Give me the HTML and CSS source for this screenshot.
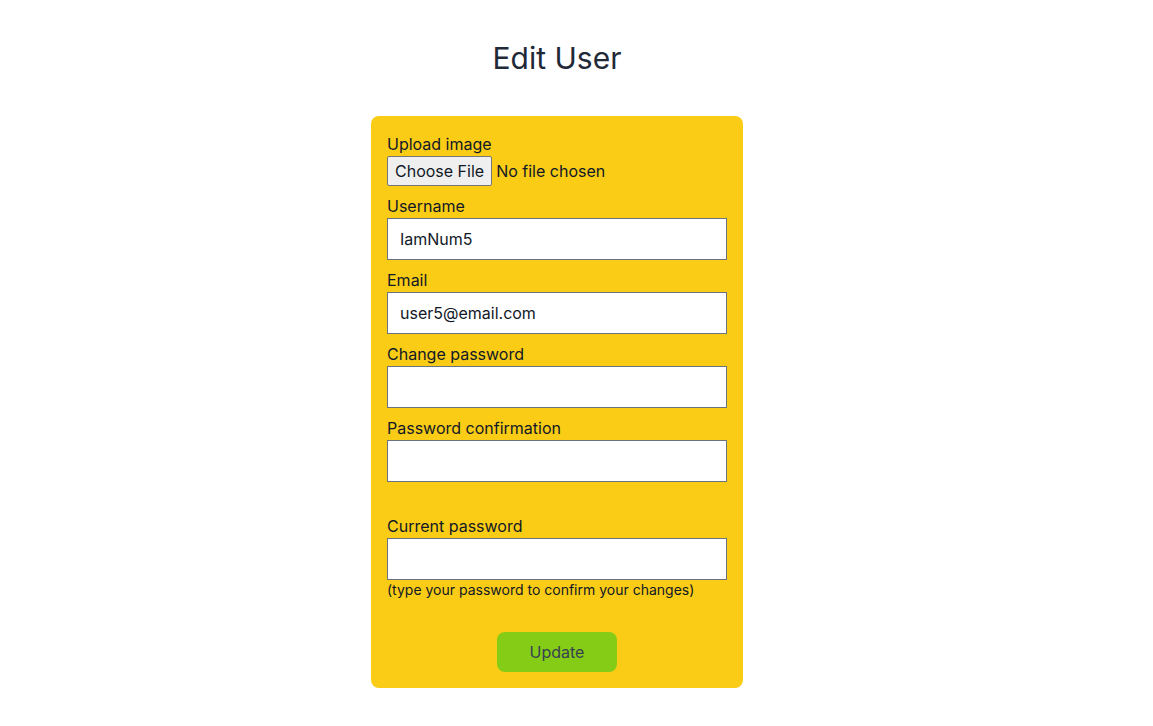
FILE: index.html
```html
<!DOCTYPE html>
<html>
<head>
<meta charset="utf-8">
<link rel="stylesheet" href="styles.css">
</head>
<body>
<main class="page">
  <h1 class="title">Edit User</h1>
  <form class="card">
    <div class="field">
      <label class="label">Upload image</label>
      <input class="file" type="file">
    </div>
    <div class="field">
      <label class="label">Username</label>
      <input class="input" type="text" value="IamNum5">
    </div>
    <div class="field">
      <label class="label">Email</label>
      <input class="input" type="email" value="user5@email.com">
    </div>
    <div class="field">
      <label class="label">Change password</label>
      <input class="input" type="password">
    </div>
    <div class="field">
      <label class="label">Password confirmation</label>
      <input class="input" type="password">
    </div>
    <div class="field current">
      <label class="label">Current password</label>
      <input class="input" type="password">
      <span class="hint">(type your password to confirm your changes)</span>
    </div>
    <div class="actions">
      <button class="btn" type="button">Update</button>
    </div>
  </form>
</main>
</body>
</html>
```
FILE: styles.css
```css
* { box-sizing: border-box; }
html, body { margin: 0; padding: 0; background: #ffffff; }
body { font-family: Inter, "Noto Sans", sans-serif; color: #111827; }
.page {
  width: 1114px;
  display: flex;
  flex-direction: column;
  align-items: center;
  padding-top: 40px;
}
.title {
  margin: 0;
  font-size: 30px;
  line-height: 36px;
  font-weight: 400;
  color: #1f2937;
}
.card {
  margin-top: 40px;
  width: 372px;
  background: #facc15;
  border-radius: 8px;
  padding: 16px;
  display: flex;
  flex-direction: column;
  gap: 8px;
}
.field { display: flex; flex-direction: column; }
.field.current { margin-top: 24px; }
.label { font-size: 16px; line-height: 24px; color: #111827; }
.file {
  font-family: inherit;
  font-size: 16px;
  line-height: 24px;
  color: #111827;
  padding: 0;
  height: 30px;
}
.file::file-selector-button {
  font-family: inherit;
  font-size: 16px;
  line-height: 24px;
  height: 30px;
  padding: 2px 7px;
  margin-right: 4px;
  background: #efefef;
  border: 1px solid #767676;
  border-radius: 2px;
  color: #111827;
}
.input {
  font-family: inherit;
  font-size: 16px;
  line-height: 24px;
  height: 42px;
  padding: 8px 12px;
  border: 1px solid #6b7280;
  background: #ffffff;
  color: #111827;
  border-radius: 0;
  outline: none;
}
.hint { font-size: 14px; line-height: 20px; color: #111827; }
.actions { display: flex; justify-content: center; margin-top: 24px; }
.btn {
  width: 120px;
  height: 40px;
  border: none;
  border-radius: 8px;
  background: #84cc16;
  color: #374151;
  font-family: inherit;
  font-size: 16px;
  line-height: 24px;
}
```
